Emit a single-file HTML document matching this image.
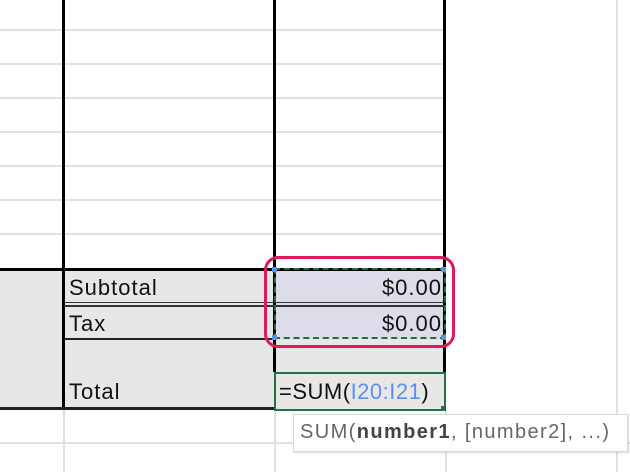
<!DOCTYPE html>
<html><head><style>
body{margin:0;width:630px;height:472px;background:#fff;position:relative;overflow:hidden;font-family:"Liberation Sans",sans-serif}
.a{position:absolute}
.h{position:absolute;height:2px;background:#e1e1e1}
.v{position:absolute;width:2px;background:#e1e1e1}
.t{position:absolute;font-size:22px;color:#111;line-height:22px;letter-spacing:1px}
</style></head><body>
<div class="h" style="left:0;top:29px;width:444px"></div>
<div class="h" style="left:0;top:63px;width:444px"></div>
<div class="h" style="left:0;top:97px;width:444px"></div>
<div class="h" style="left:0;top:131px;width:444px"></div>
<div class="h" style="left:0;top:165px;width:444px"></div>
<div class="h" style="left:0;top:199px;width:444px"></div>
<div class="h" style="left:0;top:233px;width:444px"></div>
<div class="v" style="left:616px;top:0;height:472px"></div>
<div class="a" style="left:0;top:269px;width:274px;height:140px;background:#e7e7e7"></div>
<div class="a" style="left:274px;top:339px;width:172px;height:70px;background:#e7e7e7"></div>
<div class="a" style="left:274px;top:269px;width:172px;height:70px;background:#dcdde9"></div>
<div class="a" style="left:62px;top:0;width:3px;height:410px;background:#000"></div>
<div class="a" style="left:273px;top:0;width:3px;height:372px;background:#000"></div>
<div class="a" style="left:443px;top:0;width:3px;height:372px;background:#000"></div>
<div class="a" style="left:0;top:268px;width:446px;height:3px;background:#000"></div>
<div class="a" style="left:64px;top:302px;width:382px;height:1px;background:#333"></div>
<div class="a" style="left:64px;top:305px;width:382px;height:2px;background:#333"></div>
<div class="a" style="left:64px;top:338px;width:210px;height:2px;background:#222"></div>
<div class="a" style="left:0;top:407px;width:274px;height:3px;background:#222"></div>
<div class="h" style="left:0;top:442px;width:630px"></div>
<div class="v" style="left:63px;top:410px;height:62px"></div>
<div class="v" style="left:274px;top:410px;height:62px"></div>
<div class="v" style="left:445px;top:410px;height:62px"></div>
<div class="t" style="left:69px;top:277px">Subtotal</div>
<div class="t" style="left:69px;top:313px">Tax</div>
<div class="t" style="left:69px;top:381px">Total</div>
<div class="t" style="right:188px;top:277px">$0.00</div>
<div class="t" style="right:188px;top:313px">$0.00</div>
<div class="a" style="left:274px;top:268px;width:168px;height:67px;border:2px dashed #1f6e4a"></div>
<div class="a" style="left:272px;top:267px;width:5px;height:5px;background:#5b8ff0"></div>
<div class="a" style="left:441px;top:267px;width:5px;height:5px;background:#5b8ff0"></div>
<div class="a" style="left:272px;top:335px;width:5px;height:5px;background:#5b8ff0"></div>
<div class="a" style="left:441px;top:335px;width:5px;height:5px;background:#5b8ff0"></div>
<div class="a" style="left:264px;top:256px;width:185px;height:86px;border:3px solid #e0195a;border-radius:14px"></div>
<div class="a" style="left:274px;top:372px;width:168px;height:35px;border:2px solid #217346;background:#e7e7e7"></div>
<div class="a" style="left:441px;top:406px;width:5px;height:5px;background:#217346"></div>
<div class="t" style="left:279px;top:381px;letter-spacing:0.5px">=SUM(<span style="color:#5b8ff0">I20:I21</span>)</div>
<div class="a" style="left:293px;top:414px;width:333px;height:36px;background:#fff;border:1px solid #d6d6d6;box-shadow:1px 1px 2px rgba(0,0,0,.15)"></div>
<div class="a" style="left:300px;top:422px;font-size:20px;line-height:20px;color:#666;letter-spacing:1.4px">SUM(<b style="color:#444">number1</b>, [number2], ...)</div>
</body></html>
